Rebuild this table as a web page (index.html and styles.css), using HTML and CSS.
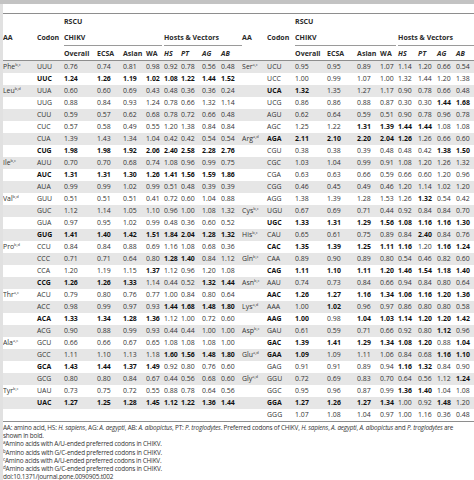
FILE: index.html
```html
<!DOCTYPE html>
<html>
<head>
<meta charset="utf-8">
<link rel="stylesheet" href="styles.css">
</head>
<body>
<div class="topbar"></div>
<div class="page">
<table class="rscu">
<colgroup>
<col style="width:34px"><col style="width:27px"><col style="width:33px"><col style="width:26px"><col style="width:23px"><col style="width:18px"><col style="width:17px"><col style="width:21px"><col style="width:19px"><col style="width:21px">
<col style="width:25px"><col style="width:28px"><col style="width:32px"><col style="width:30px"><col style="width:23px"><col style="width:18px"><col style="width:20px"><col style="width:19px"><col style="width:19px"><col style="width:18px">
</colgroup>
<thead>
<tr class="r1"><th></th><th></th><th colspan="8">RSCU</th><th></th><th></th><th colspan="8">RSCU</th></tr>
<tr class="r2"><th>AA</th><th>Codon</th><th colspan="4"><span class="grp">CHIKV</span></th><th colspan="4"><span class="grp last">Hosts &amp; Vectors</span></th><th>AA</th><th>Codon</th><th colspan="4"><span class="grp">CHIKV</span></th><th colspan="4"><span class="grp last">Hosts &amp; Vectors</span></th></tr>
<tr class="r3"><th></th><th></th><th>Overall</th><th>ECSA</th><th>Asian</th><th>WA</th><th><i>HS</i></th><th><i>PT</i></th><th><i>AG</i></th><th><i>AB</i></th><th></th><th></th><th>Overall</th><th>ECSA</th><th>Asian</th><th>WA</th><th><i>HS</i></th><th><i>PT</i></th><th><i>AG</i></th><th><i>AB</i></th></tr>
</thead>
<tbody>
<tr><td>Phe<sup>b,c</sup></td><td>UUU</td><td>0.76</td><td>0.74</td><td>0.81</td><td>0.98</td><td>0.92</td><td>0.78</td><td>0.56</td><td>0.48</td><td>Ser<sup>a,c</sup></td><td>UCU</td><td>0.95</td><td>0.95</td><td>0.89</td><td>1.07</td><td>1.14</td><td>1.20</td><td>0.66</td><td>0.54</td></tr>
<tr><td></td><td class="b">UUC</td><td class="b">1.24</td><td class="b">1.26</td><td class="b">1.19</td><td class="b">1.02</td><td class="b">1.08</td><td class="b">1.22</td><td class="b">1.44</td><td class="b">1.52</td><td></td><td>UCC</td><td>1.00</td><td>0.99</td><td>1.07</td><td>1.00</td><td>1.32</td><td>1.44</td><td>1.20</td><td>1.38</td></tr>
<tr><td>Leu<sup>b,d</sup></td><td>UUA</td><td>0.60</td><td>0.60</td><td>0.69</td><td>0.43</td><td>0.48</td><td>0.36</td><td>0.36</td><td>0.24</td><td></td><td class="b">UCA</td><td class="b">1.32</td><td>1.35</td><td>1.27</td><td>1.17</td><td>0.90</td><td>0.78</td><td>0.66</td><td>0.48</td></tr>
<tr><td></td><td>UUG</td><td>0.88</td><td>0.84</td><td>0.93</td><td>1.24</td><td>0.78</td><td>0.66</td><td>1.32</td><td>1.14</td><td></td><td>UCG</td><td>0.86</td><td>0.86</td><td>0.88</td><td>0.87</td><td>0.30</td><td>0.30</td><td class="b">1.44</td><td class="b">1.68</td></tr>
<tr><td></td><td>CUU</td><td>0.59</td><td>0.57</td><td>0.62</td><td>0.68</td><td>0.78</td><td>0.72</td><td>0.66</td><td>0.48</td><td></td><td>AGU</td><td>0.62</td><td>0.64</td><td>0.59</td><td>0.51</td><td>0.90</td><td>0.78</td><td>0.96</td><td>0.78</td></tr>
<tr><td></td><td>CUC</td><td>0.57</td><td>0.58</td><td>0.49</td><td>0.55</td><td>1.20</td><td>1.38</td><td>0.84</td><td>0.84</td><td></td><td>AGC</td><td>1.25</td><td>1.22</td><td class="b">1.31</td><td class="b">1.39</td><td class="b">1.44</td><td class="b">1.44</td><td>1.08</td><td>1.08</td></tr>
<tr><td></td><td>CUA</td><td>1.39</td><td>1.43</td><td>1.34</td><td>1.04</td><td>0.42</td><td>0.42</td><td>0.54</td><td>0.54</td><td>Arg<sup>a,d</sup></td><td class="b">AGA</td><td class="b">2.11</td><td class="b">2.10</td><td class="b">2.20</td><td class="b">2.04</td><td class="b">1.26</td><td>1.26</td><td>0.66</td><td>0.60</td></tr>
<tr><td></td><td class="b">CUG</td><td class="b">1.98</td><td class="b">1.98</td><td class="b">1.92</td><td class="b">2.06</td><td class="b">2.40</td><td class="b">2.58</td><td class="b">2.28</td><td class="b">2.76</td><td></td><td>CGU</td><td>0.38</td><td>0.38</td><td>0.39</td><td>0.48</td><td>0.48</td><td>0.42</td><td class="b">1.38</td><td class="b">1.50</td></tr>
<tr><td>Ile<sup>b,c</sup></td><td>AUU</td><td>0.70</td><td>0.70</td><td>0.68</td><td>0.74</td><td>1.08</td><td>0.96</td><td>0.99</td><td>0.75</td><td></td><td>CGC</td><td>1.03</td><td>1.04</td><td>0.99</td><td>0.91</td><td>1.08</td><td>1.20</td><td>1.26</td><td>1.32</td></tr>
<tr><td></td><td class="b">AUC</td><td class="b">1.31</td><td class="b">1.31</td><td class="b">1.30</td><td class="b">1.26</td><td class="b">1.41</td><td class="b">1.56</td><td class="b">1.59</td><td class="b">1.86</td><td></td><td>CGA</td><td>0.63</td><td>0.63</td><td>0.66</td><td>0.59</td><td>0.66</td><td>0.60</td><td>1.20</td><td>0.96</td></tr>
<tr><td></td><td>AUA</td><td>0.99</td><td>0.99</td><td>1.02</td><td>0.99</td><td>0.51</td><td>0.48</td><td>0.39</td><td>0.39</td><td></td><td>CGG</td><td>0.46</td><td>0.45</td><td>0.49</td><td>0.46</td><td>1.20</td><td>1.14</td><td>1.02</td><td>1.20</td></tr>
<tr><td>Val<sup>b,d</sup></td><td>GUU</td><td>0.51</td><td>0.51</td><td>0.51</td><td>0.41</td><td>0.72</td><td>0.60</td><td>1.04</td><td>0.88</td><td></td><td>AGG</td><td>1.38</td><td>1.39</td><td>1.28</td><td>1.53</td><td>1.26</td><td class="b">1.32</td><td>0.54</td><td>0.42</td></tr>
<tr><td></td><td>GUC</td><td>1.12</td><td>1.14</td><td>1.05</td><td>1.10</td><td>0.96</td><td>1.00</td><td>1.08</td><td>1.32</td><td>Cys<sup>b,c</sup></td><td>UGU</td><td>0.67</td><td>0.69</td><td>0.71</td><td>0.44</td><td>0.92</td><td>0.84</td><td>0.84</td><td>0.70</td></tr>
<tr><td></td><td>GUA</td><td>0.97</td><td>0.95</td><td>1.02</td><td>0.99</td><td>0.48</td><td>0.36</td><td>0.60</td><td>0.52</td><td></td><td class="b">UGC</td><td class="b">1.33</td><td class="b">1.31</td><td class="b">1.29</td><td class="b">1.56</td><td class="b">1.08</td><td class="b">1.16</td><td class="b">1.16</td><td class="b">1.30</td></tr>
<tr><td></td><td class="b">GUG</td><td class="b">1.41</td><td class="b">1.40</td><td class="b">1.42</td><td class="b">1.51</td><td class="b">1.84</td><td class="b">2.04</td><td class="b">1.28</td><td class="b">1.32</td><td>His<sup>b,c</sup></td><td>CAU</td><td>0.65</td><td>0.61</td><td>0.75</td><td>0.89</td><td>0.84</td><td class="b">2.40</td><td>0.84</td><td>0.76</td></tr>
<tr><td>Pro<sup>b,d</sup></td><td>CCU</td><td>0.84</td><td>0.84</td><td>0.88</td><td>0.69</td><td>1.16</td><td>1.08</td><td>0.68</td><td>0.36</td><td></td><td class="b">CAC</td><td class="b">1.35</td><td class="b">1.39</td><td class="b">1.25</td><td class="b">1.11</td><td class="b">1.16</td><td>1.20</td><td class="b">1.16</td><td class="b">1.24</td></tr>
<tr><td></td><td>CCC</td><td>0.71</td><td>0.71</td><td>0.64</td><td>0.80</td><td class="b">1.28</td><td class="b">1.40</td><td>0.84</td><td>1.12</td><td>Gln<sup>b,c</sup></td><td>CAA</td><td>0.89</td><td>0.90</td><td>0.89</td><td>0.80</td><td>0.54</td><td>0.46</td><td>0.82</td><td>0.60</td></tr>
<tr><td></td><td>CCA</td><td>1.20</td><td>1.19</td><td>1.15</td><td class="b">1.37</td><td>1.12</td><td>0.96</td><td>1.20</td><td>1.08</td><td></td><td class="b">CAG</td><td class="b">1.11</td><td class="b">1.10</td><td class="b">1.11</td><td class="b">1.20</td><td class="b">1.46</td><td class="b">1.54</td><td class="b">1.18</td><td class="b">1.40</td></tr>
<tr><td></td><td class="b">CCG</td><td class="b">1.26</td><td class="b">1.26</td><td class="b">1.33</td><td>1.14</td><td>0.44</td><td>0.52</td><td class="b">1.32</td><td class="b">1.44</td><td>Asn<sup>b,c</sup></td><td>AAU</td><td>0.74</td><td>0.73</td><td>0.84</td><td>0.66</td><td>0.94</td><td>0.84</td><td>0.80</td><td>0.64</td></tr>
<tr><td>Thr<sup>a,c</sup></td><td>ACU</td><td>0.79</td><td>0.80</td><td>0.76</td><td>0.77</td><td>1.00</td><td>0.84</td><td>0.80</td><td>0.64</td><td></td><td class="b">AAC</td><td class="b">1.26</td><td class="b">1.27</td><td class="b">1.16</td><td class="b">1.34</td><td class="b">1.06</td><td class="b">1.16</td><td class="b">1.20</td><td class="b">1.36</td></tr>
<tr><td></td><td>ACC</td><td>0.98</td><td>0.99</td><td>0.97</td><td>0.93</td><td class="b">1.44</td><td class="b">1.68</td><td class="b">1.48</td><td class="b">1.80</td><td>Lys<sup>a,d</sup></td><td>AAA</td><td>1.00</td><td class="b">1.02</td><td>0.96</td><td>0.97</td><td>0.86</td><td>0.80</td><td>0.80</td><td>0.58</td></tr>
<tr><td></td><td class="b">ACA</td><td class="b">1.33</td><td class="b">1.34</td><td class="b">1.28</td><td class="b">1.36</td><td>1.12</td><td>1.00</td><td>0.72</td><td>0.60</td><td></td><td class="b">AAG</td><td class="b">1.00</td><td>0.98</td><td class="b">1.04</td><td class="b">1.03</td><td class="b">1.14</td><td class="b">1.20</td><td class="b">1.20</td><td class="b">1.42</td></tr>
<tr><td></td><td>ACG</td><td>0.90</td><td>0.88</td><td>0.99</td><td>0.93</td><td>0.44</td><td>0.44</td><td>1.00</td><td>1.00</td><td>Asp<sup>b,c</sup></td><td>GAU</td><td>0.61</td><td>0.59</td><td>0.71</td><td>0.66</td><td>0.92</td><td>0.80</td><td class="b">1.12</td><td>0.96</td></tr>
<tr><td>Ala<sup>a,c</sup></td><td>GCU</td><td>0.66</td><td>0.66</td><td>0.67</td><td>0.65</td><td>1.08</td><td>1.08</td><td>1.08</td><td>1.00</td><td></td><td class="b">GAC</td><td class="b">1.39</td><td class="b">1.41</td><td class="b">1.29</td><td class="b">1.34</td><td class="b">1.08</td><td class="b">1.20</td><td>0.88</td><td class="b">1.04</td></tr>
<tr><td></td><td>GCC</td><td>1.11</td><td>1.10</td><td>1.13</td><td>1.18</td><td class="b">1.60</td><td class="b">1.56</td><td class="b">1.48</td><td class="b">1.80</td><td>Glu<sup>a,d</sup></td><td class="b">GAA</td><td class="b">1.09</td><td>1.09</td><td>1.11</td><td>1.06</td><td>0.84</td><td>0.68</td><td class="b">1.16</td><td class="b">1.10</td></tr>
<tr><td></td><td class="b">GCA</td><td class="b">1.43</td><td class="b">1.44</td><td class="b">1.37</td><td class="b">1.49</td><td>0.92</td><td>0.80</td><td>0.76</td><td>0.60</td><td></td><td>GAG</td><td>0.91</td><td>0.91</td><td>0.89</td><td>0.94</td><td class="b">1.16</td><td class="b">1.32</td><td>0.84</td><td>0.90</td></tr>
<tr><td></td><td>GCG</td><td>0.80</td><td>0.80</td><td>0.84</td><td>0.67</td><td>0.44</td><td>0.56</td><td>0.68</td><td>0.60</td><td>Gly<sup>a,d</sup></td><td>GGU</td><td>0.72</td><td>0.69</td><td>0.83</td><td>0.70</td><td>0.64</td><td>0.56</td><td>1.12</td><td class="b">1.24</td></tr>
<tr><td>Tyr<sup>b,c</sup></td><td>UAU</td><td>0.73</td><td>0.75</td><td>0.72</td><td>0.55</td><td>0.88</td><td>0.78</td><td>0.64</td><td>0.56</td><td></td><td>GGC</td><td>0.95</td><td>0.96</td><td>0.87</td><td>0.99</td><td class="b">1.36</td><td class="b">1.40</td><td>1.04</td><td>1.08</td></tr>
<tr><td></td><td class="b">UAC</td><td class="b">1.27</td><td class="b">1.25</td><td class="b">1.28</td><td class="b">1.45</td><td class="b">1.12</td><td class="b">1.22</td><td class="b">1.36</td><td class="b">1.44</td><td></td><td class="b">GGA</td><td class="b">1.27</td><td class="b">1.26</td><td class="b">1.27</td><td class="b">1.34</td><td>1.00</td><td>0.92</td><td class="b">1.48</td><td>1.20</td></tr>
<tr><td></td><td></td><td></td><td></td><td></td><td></td><td></td><td></td><td></td><td></td><td></td><td>GGG</td><td>1.07</td><td>1.08</td><td>1.04</td><td>0.97</td><td>1.00</td><td>1.16</td><td>0.36</td><td>0.48</td></tr>
</tbody>
</table>
<div class="notes">
<p class="first">AA: amino acid, HS: <i>H. sapiens</i>, AG: <i>A. aegypti</i>, AB: <i>A. albopictus</i>, PT: <i>P. troglodytes</i>. Preferred codons of CHIKV, <i>H. sapiens</i>, <i>A. aegypti</i>, <i>A. albopictus</i> and <i>P. troglodytes</i> are<br>shown in bold.</p>
<p><sup>a</sup>Amino acids with A/U-ended preferred codons in CHIKV.</p>
<p><sup>b</sup>Amino acids with G/C-ended preferred codons in CHIKV.</p>
<p><sup>c</sup>Amino acids with A/U-ended preferred codons in CHIKV.</p>
<p><sup>d</sup>Amino acids with G/C-ended preferred codons in CHIKV.</p>
<p>doi:10.1371/journal.pone.0090905.t002</p>
</div>
</div>
</body>
</html>
```

FILE: styles.css
```css
html, body {
  margin: 0;
  padding: 0;
  background: #ffffff;
  overflow: hidden;
}
body {
  width: 474px;
  height: 480px;
  font-family: "Open Sans", "DejaVu Sans", sans-serif;
  color: #333333;
}
.topbar {
  height: 4px;
  background: #c3c3c3;
}
.page {
  border-left: 3px solid #e1e1e1;
  height: 476px;
  box-sizing: border-box;
  overflow: hidden;
}
.rscu {
  margin-top: 9px;
  width: 471px;
  table-layout: fixed;
  border-collapse: separate;
  border-spacing: 0;
  border-top: 1px solid #8e8e8e;
  font-size: 6.9px;
}
.rscu th, .rscu td {
  padding: 0;
  text-align: left;
  white-space: nowrap;
  overflow: visible;
}
.rscu th {
  font-weight: 700;
  font-size: 7px;
  color: #2a2a2a;
}
.rscu .r1 th {
  height: 15px;
  vertical-align: middle;
}
.rscu .r2 th {
  height: 15px;
  vertical-align: bottom;
}
.rscu .r2 th .grp {
  display: block;
  border-bottom: 1px solid #9a9a9a;
  margin-right: 2px;
  line-height: 12px;
  padding-bottom: 1px;
}
.rscu .r2 th .grp.last {
  margin-right: 0;
}
.rscu .r2 th:not([colspan]) {
  line-height: 12px;
  padding-bottom: 2px;
}
.rscu .r3 th {
  height: 14px;
  border-bottom: 1px solid #8e8e8e;
  vertical-align: middle;
}
.rscu td {
  height: 12px;
  line-height: 12px;
  vertical-align: middle;
}
.rscu tbody tr:nth-child(odd) td {
  background: #e6e6e6;
}
.rscu tbody tr:last-child td {
  border-bottom: 1px solid #8e8e8e;
}
.rscu td.b {
  font-weight: 700;
  color: #111111;
}
.rscu sup {
  font-size: 4px;
  line-height: 0;
  vertical-align: 3px;
}
.notes {
  padding-top: 2px;
  font-size: 6.4px;
  letter-spacing: -0.19px;
  line-height: 8.2px;
  color: #333333;
}
.notes p {
  margin: 0;
  white-space: nowrap;
}
.notes sup {
  font-size: 4.5px;
  line-height: 0;
  vertical-align: 2.5px;
}
```
